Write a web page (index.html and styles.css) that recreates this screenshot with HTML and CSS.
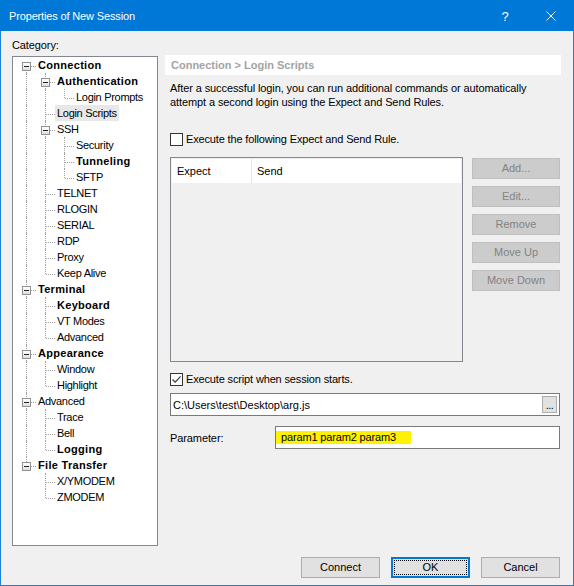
FILE: index.html
```html
<!DOCTYPE html>
<html>
<head>
<meta charset="utf-8">
<title>Properties of New Session</title>
<link rel="stylesheet" href="styles.css">
</head>
<body>
<div class="window">
  <div class="titlebar">
    <span class="title">Properties of New Session</span>
    <span class="cap cap-help">?</span>
    <span class="cap"><svg width="10" height="10" viewBox="0 0 10 10"><path d="M0.5 0.5 L9.5 9.5 M9.5 0.5 L0.5 9.5" stroke="#fff" stroke-width="1" fill="none"/></svg></span>
  </div>
  <div class="client">
    <div class="main">
      <div class="left">
        <div class="cat">Category:</div>
        <div class="tree">
          <div class="row"><span class="c f"><i class="bx"></i></span><span class="lb b">Connection</span></div>
          <div class="row"><span class="c p"></span><span class="c t"><i class="bx"></i></span><span class="lb b">Authentication</span></div>
          <div class="row"><span class="c p"></span><span class="c p"></span><span class="c l"></span><span class="lb">Login Prompts</span></div>
          <div class="row"><span class="c p"></span><span class="c t"></span><span class="lb sel">Login Scripts</span></div>
          <div class="row"><span class="c p"></span><span class="c t"><i class="bx"></i></span><span class="lb">SSH</span></div>
          <div class="row"><span class="c p"></span><span class="c p"></span><span class="c t"></span><span class="lb">Security</span></div>
          <div class="row"><span class="c p"></span><span class="c p"></span><span class="c t"></span><span class="lb b">Tunneling</span></div>
          <div class="row"><span class="c p"></span><span class="c p"></span><span class="c l"></span><span class="lb">SFTP</span></div>
          <div class="row"><span class="c p"></span><span class="c t"></span><span class="lb">TELNET</span></div>
          <div class="row"><span class="c p"></span><span class="c t"></span><span class="lb">RLOGIN</span></div>
          <div class="row"><span class="c p"></span><span class="c t"></span><span class="lb">SERIAL</span></div>
          <div class="row"><span class="c p"></span><span class="c t"></span><span class="lb">RDP</span></div>
          <div class="row"><span class="c p"></span><span class="c t"></span><span class="lb">Proxy</span></div>
          <div class="row"><span class="c p"></span><span class="c l"></span><span class="lb">Keep Alive</span></div>
          <div class="row"><span class="c t"><i class="bx"></i></span><span class="lb b">Terminal</span></div>
          <div class="row"><span class="c p"></span><span class="c t"></span><span class="lb b">Keyboard</span></div>
          <div class="row"><span class="c p"></span><span class="c t"></span><span class="lb">VT Modes</span></div>
          <div class="row"><span class="c p"></span><span class="c l"></span><span class="lb">Advanced</span></div>
          <div class="row"><span class="c t"><i class="bx"></i></span><span class="lb b">Appearance</span></div>
          <div class="row"><span class="c p"></span><span class="c t"></span><span class="lb">Window</span></div>
          <div class="row"><span class="c p"></span><span class="c l"></span><span class="lb">Highlight</span></div>
          <div class="row"><span class="c t"><i class="bx"></i></span><span class="lb">Advanced</span></div>
          <div class="row"><span class="c p"></span><span class="c t"></span><span class="lb">Trace</span></div>
          <div class="row"><span class="c p"></span><span class="c t"></span><span class="lb">Bell</span></div>
          <div class="row"><span class="c p"></span><span class="c l"></span><span class="lb b">Logging</span></div>
          <div class="row"><span class="c l"><i class="bx"></i></span><span class="lb b">File Transfer</span></div>
          <div class="row"><span class="c"></span><span class="c t"></span><span class="lb">X/YMODEM</span></div>
          <div class="row"><span class="c"></span><span class="c l"></span><span class="lb">ZMODEM</span></div>
        </div>
      </div>
      <div class="right">
        <div class="hdr">Connection &gt; Login Scripts</div>
        <div class="pane">
          <div class="desc">After a successful login, you can run additional commands or automatically<br>attempt a second login using the Expect and Send Rules.</div>
          <div class="chk-row first"><span class="chk"></span><span class="chk-label">Execute the following Expect and Send Rule.</span></div>
          <div class="list-row">
            <div class="list">
              <div class="lh"><span class="col1">Expect</span><span class="col2">Send</span></div>
            </div>
            <div class="btns">
              <div class="btn-d">Add...</div>
              <div class="btn-d">Edit...</div>
              <div class="btn-d">Remove</div>
              <div class="btn-d">Move Up</div>
              <div class="btn-d">Move Down</div>
            </div>
          </div>
          <div class="chk-row second"><span class="chk"><svg width="11" height="11" viewBox="0 0 11 11"><path d="M1.5 5.5 L4.2 8.2 L9.6 2.4" fill="none" stroke="#3a3a3a" stroke-width="1.2"/></svg></span><span class="chk-label">Execute script when session starts.</span></div>
          <div class="path"><span class="path-text">C:\Users\test\Desktop\arg.js</span><span class="browse">...</span></div>
          <div class="param-row">
            <span class="param-label">Parameter:</span>
            <div class="param"><span class="hl">param1 param2 param3</span></div>
          </div>
        </div>
      </div>
    </div>
    <div class="footer">
      <div class="btn">Connect</div>
      <div class="btn def">OK</div>
      <div class="btn">Cancel</div>
    </div>
  </div>
</div>
</body>
</html>
```
FILE: styles.css
```css
html, body {
  margin: 0;
  padding: 0;
  background: #f0f0f0;
}

.window {
  width: 574px;
  height: 586px;
  box-sizing: border-box;
  border: 1px solid #1a80d8;
  border-top: 0;
  display: flex;
  flex-direction: column;
  background: #f0f0f0;
  font-family: "Liberation Sans", Arial, sans-serif;
  font-size: 11px;
  color: #000;
}

.titlebar {
  height: 31px;
  margin: 0 -1px;
  background: #0078d7;
  color: #fff;
  display: flex;
  align-items: center;
  flex: none;
}

.title {
  padding-left: 9px;
  line-height: 14px;
  letter-spacing: -0.15px;
}

.cap {
  width: 46px;
  height: 31px;
  display: flex;
  align-items: center;
  justify-content: center;
}

.cap-help {
  margin-left: auto;
  font-size: 13px;
  padding-top: 1px;
  box-sizing: border-box;
}

.client {
  flex: 1;
  display: flex;
  flex-direction: column;
  padding: 7px 12px 0 11px;
}

.main {
  display: flex;
  gap: 7px;
}

.left {
  width: 146px;
  display: flex;
  flex-direction: column;
}

.cat {
  height: 14px;
  line-height: 14px;
  letter-spacing: -0.1px;
}

.tree {
  margin-top: 4px;
  height: 490px;
  box-sizing: border-box;
  border: 1px solid #828790;
  background: #fff;
  padding-left: 4px;
}

.row {
  display: flex;
  height: 16px;
}

.c {
  width: 19px;
  height: 16px;
  flex: none;
  position: relative;
}

.p::before,
.t::before {
  content: "";
  position: absolute;
  left: 9px;
  top: 0;
  bottom: 0;
  border-left: 1px dotted #a0a0a0;
}

.l::before {
  content: "";
  position: absolute;
  left: 9px;
  top: 0;
  height: 9px;
  border-left: 1px dotted #a0a0a0;
}

.f::before {
  content: "";
  position: absolute;
  left: 9px;
  top: 9px;
  bottom: 0;
  border-left: 1px dotted #a0a0a0;
}

.t::after,
.l::after,
.f::after {
  content: "";
  position: absolute;
  left: 10px;
  top: 9px;
  width: 9px;
  border-top: 1px dotted #a0a0a0;
}

.bx {
  position: absolute;
  left: 5px;
  top: 5px;
  width: 9px;
  height: 9px;
  box-sizing: border-box;
  border: 1px solid #919191;
  background: linear-gradient(#ffffff, #dedede);
  z-index: 1;
}

.bx::after {
  content: "";
  position: absolute;
  left: 1px;
  top: 3px;
  width: 5px;
  height: 1px;
  background: #222;
}

.lb {
  padding: 0 2px;
  line-height: 16px;
  letter-spacing: -0.3px;
  white-space: nowrap;
}

.lb.b {
  font-weight: bold;
  letter-spacing: 0.3px;
}

.lb.sel {
  background: #e8e8e8;
}

.right {
  width: 396px;
  padding-top: 17px;
}

.hdr {
  height: 20px;
  line-height: 20px;
  background: #fff;
  padding-left: 6px;
  font-weight: bold;
  color: #a3a3a3;
}

.pane {
  padding: 0 1px 0 5px;
}

.desc {
  margin-top: 6px;
  line-height: 14px;
  letter-spacing: -0.1px;
  white-space: nowrap;
}

.chk-row {
  display: flex;
  align-items: center;
  height: 13px;
  gap: 3px;
}

.chk-row.first {
  margin-top: 24px;
}

.chk-row.second {
  margin-top: 11px;
}

.chk {
  width: 13px;
  height: 13px;
  box-sizing: border-box;
  border: 1px solid #333;
  background: #fff;
  display: flex;
  align-items: center;
  justify-content: center;
}

.chk-label {
  line-height: 13px;
  letter-spacing: -0.15px;
}

.list-row {
  margin-top: 11px;
  display: flex;
  gap: 9px;
}

.list {
  width: 293px;
  height: 205px;
  box-sizing: border-box;
  border: 1px solid #828790;
  background: #f0f0f0;
  padding: 1px;
}

.lh {
  display: flex;
  height: 24px;
  line-height: 24px;
  background: #fff;
}

.col1 {
  width: 80px;
  box-sizing: border-box;
  padding-left: 5px;
  border-right: 1px solid #e5e5e5;
}

.col2 {
  padding-left: 5px;
}

.btns {
  margin-top: 1px;
  display: flex;
  flex-direction: column;
  gap: 7px;
}

.btn-d {
  width: 88px;
  height: 21px;
  box-sizing: border-box;
  border: 1px solid #bfbfbf;
  background: #cccccc;
  color: #838383;
  text-align: center;
  line-height: 19px;
}

.path {
  margin-top: 7px;
  height: 23px;
  box-sizing: border-box;
  border: 1px solid #7a7a7a;
  background: #fff;
  display: flex;
  align-items: center;
  padding-left: 2px;
}

.browse {
  margin-left: auto;
  margin-right: 2px;
  width: 15px;
  height: 17px;
  box-sizing: border-box;
  border: 1px solid #adadad;
  background: #e1e1e1;
  text-align: center;
  line-height: 17px;
  letter-spacing: -0.5px;
}

.param-row {
  margin-top: 10px;
  display: flex;
  align-items: center;
  height: 23px;
}

.param-label {
  width: 105px;
  letter-spacing: -0.1px;
}

.param {
  width: 285px;
  height: 23px;
  box-sizing: border-box;
  border: 1px solid #7a7a7a;
  background: #fff;
  display: flex;
  align-items: center;
}

.hl {
  background: #fff200;
  height: 13px;
  line-height: 13px;
  padding: 0 15px 0 5px;
  letter-spacing: -0.15px;
}

.footer {
  margin-top: 11px;
  display: flex;
  justify-content: flex-end;
  gap: 11px;
  padding-right: 1px;
}

.btn {
  width: 79px;
  height: 21px;
  box-sizing: border-box;
  border: 1px solid #adadad;
  background: #e1e1e1;
  text-align: center;
  line-height: 19px;
}

.btn.def {
  border: 2px solid #0078d7;
  line-height: 17px;
  outline: 1px dotted #000;
  outline-offset: -4px;
}
```
